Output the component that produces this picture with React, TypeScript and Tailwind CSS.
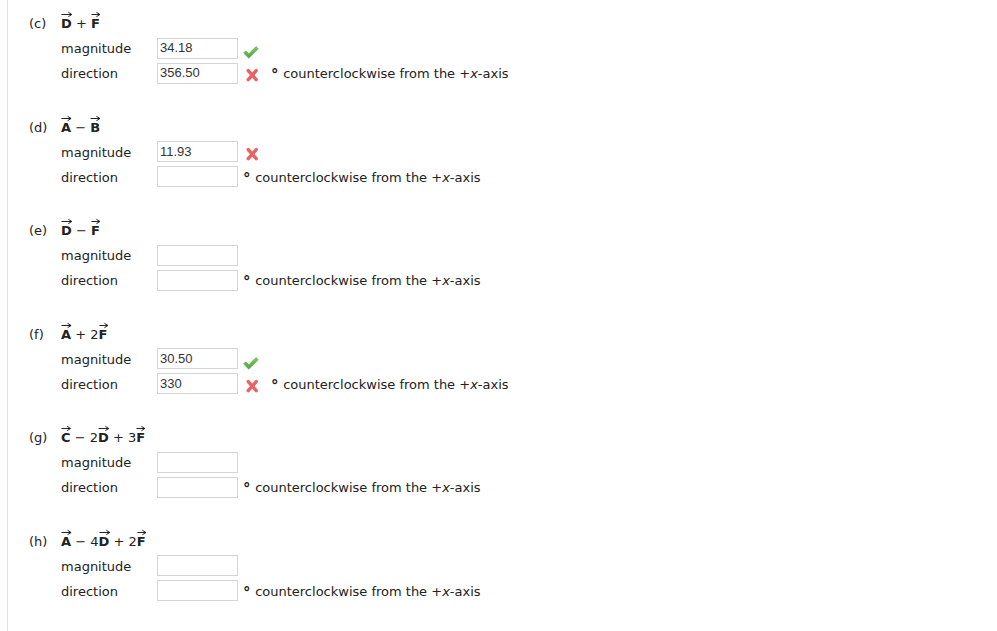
import React from "react";

type Part = string | { v: string };

const Vec = ({ v }: { v: string }) => (
  <span className="relative inline-block font-bold">
    {v}
    <svg
      className="absolute left-0 top-[-2px] overflow-visible"
      width="100%"
      height="5"
    >
      <line x1="0.5" y1="2.5" x2="100%" y2="2.5" stroke="#222" strokeWidth="1" />
      <svg x="100%" y="0" overflow="visible">
        <path d="M-3.5 0.3 L0 2.5 L-3.5 4.7" fill="none" stroke="#222" strokeWidth="1" />
      </svg>
    </svg>
  </span>
);

const Check = () => (
  <svg width="16" height="16" viewBox="0 0 16 16" className="mt-[7px]">
    <defs>
      <linearGradient id="cg" x1="0" y1="0" x2="0" y2="1">
        <stop offset="0" stopColor="#7ccc5e" />
        <stop offset="1" stopColor="#4ea543" />
      </linearGradient>
    </defs>
    <path
      d="M0.6 8 L2.8 5.8 L5.8 8.8 L13 1.6 L15.3 3.8 L5.8 13.2 Z"
      fill="url(#cg)"
      stroke="#58ad4a"
      strokeWidth="0.6"
      strokeLinejoin="round"
    />
  </svg>
);

const Cross = () => (
  <svg width="16" height="16" viewBox="0 0 16 16" className="mt-[4px]">
    <g stroke="#e86463" strokeWidth="3.4" strokeLinecap="round">
      <line x1="5.2" y1="3.6" x2="13.2" y2="12.6" />
      <line x1="13.2" y1="3.6" x2="5.2" y2="12.6" />
    </g>
  </svg>
);

type Row = { label: string; value: string; icon?: "check" | "cross"; unit?: boolean };

type Section = { tag: string; expr: Part[]; mag: Omit<Row, "label" | "unit">; dir: Omit<Row, "label" | "unit"> };

const sections: Section[] = [
  { tag: "(c)", expr: [{ v: "D" }, " + ", { v: "F" }], mag: { value: "34.18", icon: "check" }, dir: { value: "356.50", icon: "cross" } },
  { tag: "(d)", expr: [{ v: "A" }, " \u2212 ", { v: "B" }], mag: { value: "11.93", icon: "cross" }, dir: { value: "" } },
  { tag: "(e)", expr: [{ v: "D" }, " \u2212 ", { v: "F" }], mag: { value: "" }, dir: { value: "" } },
  { tag: "(f)", expr: [{ v: "A" }, " + 2", { v: "F" }], mag: { value: "30.50", icon: "check" }, dir: { value: "330", icon: "cross" } },
  { tag: "(g)", expr: [{ v: "C" }, " \u2212 2", { v: "D" }, " + 3", { v: "F" }], mag: { value: "" }, dir: { value: "" } },
  { tag: "(h)", expr: [{ v: "A" }, " \u2212 4", { v: "D" }, " + 2", { v: "F" }], mag: { value: "" }, dir: { value: "" } },
];

const InputRow = ({ label, value, icon, unit }: Row) => (
  <div className="flex h-[20px] items-center">
    <div className="w-[96px] translate-y-[1px] leading-[20px]">{label}</div>
    <div className="box-border flex h-[21px] w-[81px] items-center border border-[#d4d4d4] bg-white px-[2px] font-['Liberation_Sans',Arial,sans-serif] text-[13px] text-[#333]">
      {value}
    </div>
    {icon ? (
      <div className="ml-[5px] flex h-[20px] w-[28px] items-start">
        {icon === "check" ? <Check /> : <Cross />}
      </div>
    ) : (
      <div className="w-[5px]" />
    )}
    {unit && (
      <div className="flex translate-y-[1px] items-center whitespace-pre leading-[20px]">
        <span className="inline-block w-[8px] translate-y-[1px] text-[15px] font-bold leading-[20px]">°</span>
        <span> counterclockwise from the +<i>x</i>-axis</span>
      </div>
    )}
  </div>
);

export default function App() {
  return (
    <div className="min-h-[631px] w-full bg-white font-['DejaVu_Sans','Verdana',sans-serif] text-[13px] text-[#222]">
      <div className="ml-[7px] min-h-[631px] border-l border-[#e2e2e2] pl-[21px] pt-[13px]">
        {sections.map((s) => (
          <div key={s.tag} className="flex h-[103.6px] flex-col">
            <div className="flex h-[20px] translate-y-[1px] items-center leading-[20px]">
              <div className="w-[32px]">{s.tag}</div>
              <div className="whitespace-pre">
                {s.expr.map((p, i) =>
                  typeof p === "string" ? <span key={i}>{p}</span> : <Vec key={i} v={p.v} />
                )}
              </div>
            </div>
            <div className="mt-[5px] flex flex-col gap-[5px] pl-[32px]">
              <InputRow label="magnitude" value={s.mag.value} icon={s.mag.icon} />
              <InputRow label="direction" value={s.dir.value} icon={s.dir.icon} unit />
            </div>
          </div>
        ))}
      </div>
    </div>
  );
}
